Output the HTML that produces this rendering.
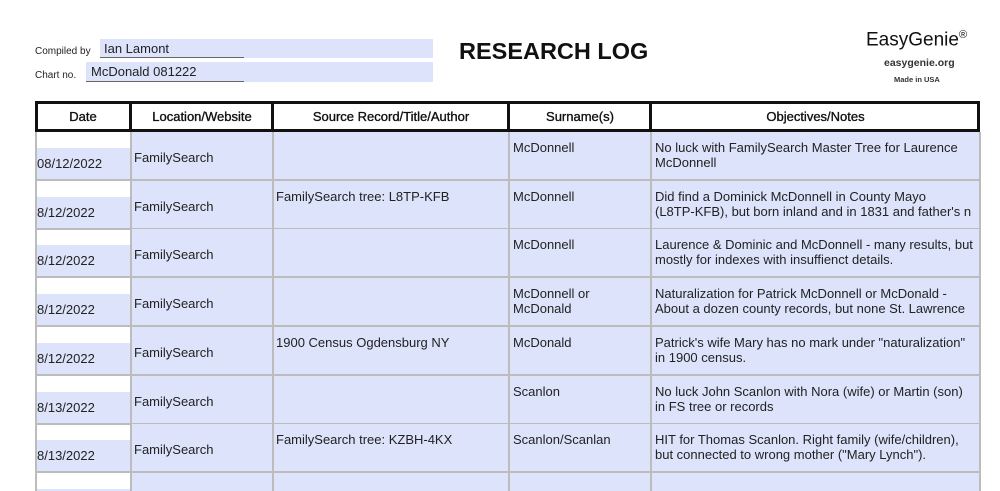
<!DOCTYPE html>
<html><head><meta charset="utf-8"><style>
html,body{margin:0;width:1000px;height:491px;overflow:hidden}
body{background:#fff;position:relative;font-family:"Liberation Sans",Arial,sans-serif;color:#222}
.a{position:absolute}
.cell{position:absolute;background:#dde3fb}
.t{position:absolute;font-size:13px;line-height:15px;white-space:nowrap;color:#222}
.h{position:absolute;top:101px;height:31px;line-height:31px;text-align:center;color:#111;font-family:"Liberation Sans",sans-serif;font-size:13px;-webkit-text-stroke:0.35px #111}
.vl{position:absolute;width:2px;background:#bcbcbc}
.hl{position:absolute;height:2px;background:#bcbcbc;left:35px;width:946px}
</style></head><body>
<div class="a" style="left:35px;top:46px;font-size:10px">Compiled by</div>
<div class="a" style="left:35px;top:70px;font-size:10px">Chart no.</div>
<div class="a" style="left:100px;top:39px;width:333px;height:19px;background:#dde3fb"></div>
<div class="a" style="left:86px;top:62px;width:347px;height:20px;background:#dde3fb"></div>
<div class="a" style="left:100px;top:57px;width:144px;height:1px;background:#666"></div>
<div class="a" style="left:86px;top:81px;width:158px;height:1px;background:#666"></div>
<div class="a" style="left:104px;top:41px;font-size:13px">Ian Lamont</div>
<div class="a" style="left:91px;top:64px;font-size:13px">McDonald 081222</div>
<div class="a" style="left:459px;top:38px;font-size:23.5px;font-weight:bold;color:#111">RESEARCH LOG</div>
<div class="a" style="left:866px;top:29px;font-size:19px;color:#111">EasyGenie<sup style="font-size:11px">®</sup></div>
<div class="a" style="left:884px;top:57px;font-size:10.5px;font-weight:bold;color:#333">easygenie.org</div>
<div class="a" style="left:894px;top:75px;font-size:7.5px;font-weight:bold;color:#333">Made in USA</div>

<div class="a" style="left:35px;top:101px;width:945px;height:31px;box-sizing:border-box;border:3px solid #111"></div>
<div class="a" style="left:129px;top:101px;width:3px;height:31px;background:#111"></div>
<div class="a" style="left:271px;top:101px;width:3px;height:31px;background:#111"></div>
<div class="a" style="left:507px;top:101px;width:3px;height:31px;background:#111"></div>
<div class="a" style="left:649px;top:101px;width:3px;height:31px;background:#111"></div>
<div class="h" style="left:35px;width:96px">Date</div>
<div class="h" style="left:131px;width:142px">Location/Website</div>
<div class="h" style="left:273px;width:236px">Source Record/Title/Author</div>
<div class="h" style="left:509px;width:142px">Surname(s)</div>
<div class="h" style="left:651px;width:329px">Objectives/Notes</div>

<div id="rows"></div>
<script>
var d=[["08/12/2022","","McDonnell","No luck with FamilySearch Master Tree for Laurence<br>McDonnell"],
["8/12/2022","FamilySearch tree: L8TP-KFB","McDonnell","Did find a Dominick McDonnell in County Mayo<br>(L8TP-KFB), but born inland and in 1831 and father's n"],
["8/12/2022","","McDonnell","Laurence &amp; Dominic and McDonnell - many results, but<br>mostly for indexes with insuffienct details."],
["8/12/2022","","McDonnell or<br>McDonald","Naturalization for Patrick McDonnell or McDonald -<br>About a dozen county records, but none St. Lawrence"],
["8/12/2022","1900 Census Ogdensburg NY","McDonald","Patrick's wife Mary has no mark under \"naturalization\"<br>in 1900 census."],
["8/13/2022","","Scanlon","No luck John Scanlon with Nora (wife) or Martin (son)<br>in FS tree or records"],
["8/13/2022","FamilySearch tree: KZBH-4KX","Scanlon/Scanlan","HIT for Thomas Scanlon. Right family (wife/children),<br>but connected to wrong mother (\"Mary Lynch\")."],
["","","",""]];
var h="";
for(var i=0;i<d.length;i++){var y=Math.round(132+i*48.7),r=d[i],H=(i<7)?47:(491-y);
h+='<div class="cell" style="left:35px;top:'+(y+16)+'px;width:95px;height:'+(H-16)+'px"></div>';
h+='<div class="cell" style="left:131px;top:'+y+'px;width:141px;height:'+H+'px"></div>';
h+='<div class="cell" style="left:273px;top:'+y+'px;width:235px;height:'+H+'px"></div>';
h+='<div class="cell" style="left:509px;top:'+y+'px;width:141px;height:'+H+'px"></div>';
h+='<div class="cell" style="left:651px;top:'+y+'px;width:329px;height:'+H+'px"></div>';
if(i<7){
h+='<div class="hl" style="top:'+(y+H)+'px"></div>';
h+='<div class="t" style="left:37px;top:'+(y+24)+'px">'+r[0]+'</div>';
h+='<div class="t" style="left:134px;top:'+(y+18)+'px">FamilySearch</div>';
h+='<div class="t" style="left:276px;top:'+(y+8)+'px">'+r[1]+'</div>';
h+='<div class="t" style="left:513px;top:'+(y+8)+'px">'+r[2]+'</div>';
h+='<div class="t" style="left:655px;top:'+(y+8)+'px">'+r[3]+'</div>';}
}
[35,130,272,508,650,979].forEach(function(x){h+='<div class="vl" style="left:'+x+'px;top:132px;height:359px"></div>';});
document.getElementById('rows').innerHTML=h;
</script>
</body></html>
